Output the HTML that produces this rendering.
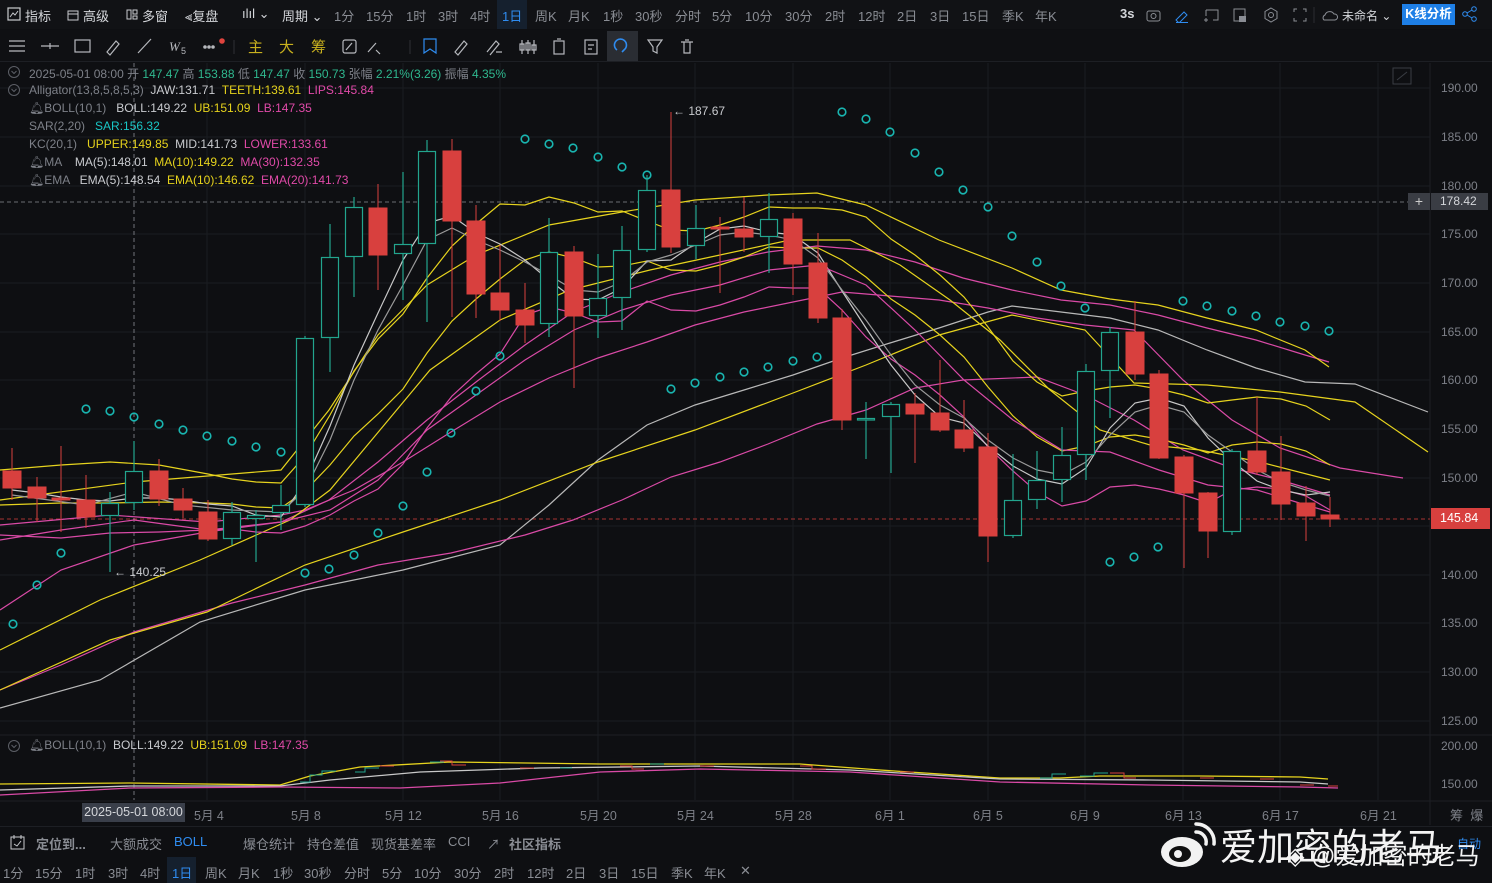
<!DOCTYPE html>
<html><head><meta charset="utf-8">
<style>
*{margin:0;padding:0;box-sizing:border-box}
body{width:1492px;height:883px;overflow:hidden;background:#0e0f12;font-family:"Liberation Sans","Noto Sans CJK SC",sans-serif;color:#8a8d94;position:relative}
.a{position:absolute;white-space:nowrap}
.tb{font-size:13px;top:6px;color:#8a8d94}
.w{color:#d4d6da}
.lg{font-size:12px;left:29px}
.g{color:#7d8088}.gr{color:#2fb88f}.y{color:#e5d21c}.m{color:#e04aa8}.c{color:#19c6c6}.wt{color:#c9cbcf}
.ax{font-size:12px;color:#7d8088;left:1441px}
.dt{font-size:12.5px;color:#7d8088;top:805px}
.bt{font-size:13px;top:834px;color:#8a8d94}
.tf{font-size:13px;top:863px;color:#8a8d94}
</style></head><body>
<!-- top toolbar -->
<div class="a" style="left:0;top:0;width:1492px;height:29px;background:#111215"></div>
<svg class="a" style="left:7px;top:7px" width="14" height="14"><rect x="1" y="1" width="12" height="12" fill="none" stroke="#c9cbcf" stroke-width="1.2"/><polyline points="3,10 6,6 8,8 11,4" fill="none" stroke="#c9cbcf"/></svg>
<div class="a tb w" style="left:25px">指标</div>
<svg class="a" style="left:67px;top:8px" width="12" height="13"><rect x="1" y="3" width="10" height="9" fill="none" stroke="#c9cbcf"/><line x1="1" y1="6" x2="11" y2="6" stroke="#c9cbcf"/></svg>
<div class="a tb w" style="left:83px">高级</div>
<svg class="a" style="left:126px;top:8px" width="12" height="13"><rect x="1" y="2" width="4" height="9" fill="none" stroke="#c9cbcf"/><rect x="7" y="2" width="4" height="4" fill="none" stroke="#c9cbcf"/><rect x="7" y="8" width="4" height="3" fill="none" stroke="#c9cbcf"/></svg>
<div class="a tb w" style="left:142px">多窗</div>
<div class="a tb w" style="left:185px">⫷复盘</div>
<div class="a tb w" style="left:242px">ılıl ⌄</div>
<div class="a tb w" style="left:282px">周期 ⌄</div>
<div class="a" style="left:497px;top:0;width:30px;height:29px;background:#15202e"></div>
<div class="a tb" style="left:334px">1分</div><div class="a tb" style="left:366px">15分</div><div class="a tb" style="left:406px">1时</div><div class="a tb" style="left:438px">3时</div><div class="a tb" style="left:470px">4时</div><div class="a tb" style="left:502px;color:#2f8cf0">1日</div><div class="a tb" style="left:535px">周K</div><div class="a tb" style="left:568px">月K</div><div class="a tb" style="left:603px">1秒</div><div class="a tb" style="left:635px">30秒</div><div class="a tb" style="left:675px">分时</div><div class="a tb" style="left:712px">5分</div><div class="a tb" style="left:745px">10分</div><div class="a tb" style="left:785px">30分</div><div class="a tb" style="left:825px">2时</div><div class="a tb" style="left:858px">12时</div><div class="a tb" style="left:897px">2日</div><div class="a tb" style="left:930px">3日</div><div class="a tb" style="left:962px">15日</div><div class="a tb" style="left:1002px">季K</div><div class="a tb" style="left:1035px">年K</div>
<div class="a tb w" style="left:1120px;font-weight:bold">3s</div>
<svg class="a" style="left:1146px;top:7px" width="330" height="16">
<rect x="1" y="4" width="13" height="10" rx="2" fill="none" stroke="#8a8d94"/><circle cx="7.5" cy="9" r="2.5" fill="none" stroke="#8a8d94"/>
<path d="M30 13 L38 5 L41 8 L33 16 Z" fill="none" stroke="#2f8cf0"/><line x1="30" y1="15.5" x2="42" y2="15.5" stroke="#2f8cf0"/>
<path d="M60 3 H72 V13 H67 M60 3 V9" fill="none" stroke="#8a8d94"/><path d="M60 11v4M58 13h4" stroke="#8a8d94"/>
<rect x="88" y="2" width="11" height="12" fill="none" stroke="#8a8d94"/><rect x="93" y="9" width="7" height="6" fill="#8a8d94"/>
<path d="M125 1 L131 4.5 V11.5 L125 15 L119 11.5 V4.5 Z" fill="none" stroke="#8a8d94"/><circle cx="125" cy="8" r="2.5" fill="none" stroke="#8a8d94"/>
<path d="M148 5V2H151M157 2H160V5M160 11V14H157M151 14H148V11" fill="none" stroke="#8a8d94"/>
<line x1="168" y1="0" x2="168" y2="16" stroke="#2a2c31"/>
<path d="M178 13 H189 A3 3 0 0 0 188 7 A5 5 0 0 0 179 8 A3 3 0 0 0 178 13Z" fill="none" stroke="#8a8d94"/>
</svg>
<div class="a tb w" style="left:1342px;font-size:12px;top:7px">未命名 ⌄</div>
<div class="a" style="left:1402px;top:4px;width:53px;height:21px;background:#1e7fe6;color:#fff;font-size:12.5px;line-height:21px;text-align:center;font-weight:bold">K线分析</div>
<svg class="a" style="left:1462px;top:6px" width="16" height="16"><circle cx="3" cy="8" r="2.3" fill="none" stroke="#2f8cf0"/><circle cx="12" cy="3" r="2.3" fill="none" stroke="#2f8cf0"/><circle cx="12" cy="13" r="2.3" fill="none" stroke="#2f8cf0"/><path d="M5 7L10 4M5 9L10 12" stroke="#2f8cf0"/></svg>

<!-- drawing toolbar -->
<div class="a" style="left:0;top:30px;width:1492px;height:32px;background:#0f1013;border-bottom:1px solid #1d1f24"></div>
<div class="a" style="left:607px;top:31px;width:31px;height:30px;background:#2a2d33"></div>
<svg class="a" style="left:0;top:30px" width="700" height="32">
<g stroke="#b6b8bd" fill="none" stroke-width="1.2">
<path d="M9 11h16M9 16h16M9 21h16"/>
<path d="M41 16h18M50 13v6"/>
<rect x="75" y="10" width="15" height="12"/>
<path d="M107 22l9-11 3 3-9 11z"/>
<path d="M138 23l13-14"/>
<text x="169" y="21" fill="#b6b8bd" stroke="none" font-size="13" font-style="italic" font-family="Liberation Serif">W</text><text x="181" y="24" fill="#b6b8bd" stroke="none" font-size="9">5</text>
<circle cx="205" cy="17" r="1.2" fill="#b6b8bd"/><circle cx="209" cy="17" r="1.2" fill="#b6b8bd"/><circle cx="213" cy="17" r="1.2" fill="#b6b8bd"/>
<line x1="234" y1="10" x2="234" y2="24" stroke="#2a2c31"/>
<rect x="343" y="10" width="13" height="13" rx="2"/><path d="M346 20l6-7"/>
<path d="M368 22l8-9M376 20l4 4"/>
<line x1="410" y1="10" x2="410" y2="24" stroke="#2a2c31"/>
<path d="M424 9h12v14l-6-4-6 4z" stroke="#2f8cf0"/>
<path d="M455 22l9-11 3 3-9 11z"/>
<path d="M487 22l9-11 3 3-9 11M496 22h6"/>
<path d="M522 10v14M528 10v14M534 10v14M520 14h4v6h-4zM526 13h4v7h-4zM532 15h4v5h-4z"/>
<rect x="554" y="11" width="10" height="13"/><path d="M557 9h4"/>
<rect x="585" y="10" width="12" height="14"/><path d="M588 15h6M588 19h4"/>
<path d="M617 20a6 6 0 1 1 8-1l-3 3" stroke="#2f8cf0" stroke-width="1.6"/>
<path d="M648 10h14l-5 7v6l-4-2v-4z"/>
<path d="M681 12h12M684 12v11h6v-11M685 10h4"/>
</g>
<circle cx="222" cy="11" r="2.8" fill="#e0443e"/>
<text x="248" y="22" fill="#c8b01e" font-size="15">主</text><text x="279" y="22" fill="#c8b01e" font-size="15">大</text><text x="311" y="22" fill="#c8b01e" font-size="15">筹</text>
</svg>

<!-- chart svg -->
<svg class="a" style="left:0;top:63px" width="1492" height="762" viewBox="0 63 1492 762">
<g stroke="#1a1c21" stroke-width="1">
<path d="M0 88H1430M0 137H1430M0 186H1430M0 234H1430M0 283H1430M0 332H1430M0 380H1430M0 429H1430M0 478H1430M0 526H1430M0 575H1430M0 623H1430M0 672H1430M0 721H1430"/>
<path d="M207 63V800M305 63V800M403 63V800M500 63V800M598 63V800M695 63V800M793 63V800M890 63V800M988 63V800M1085 63V800M1183 63V800M1280 63V800M1378 63V800"/>
</g>
<line x1="0" y1="735" x2="1492" y2="735" stroke="#1d1f24"/>
<line x1="0" y1="801" x2="1492" y2="801" stroke="#1d1f24"/>
<line x1="1430" y1="63" x2="1430" y2="825" stroke="#1d1f24"/>
<line x1="0" y1="202" x2="1430" y2="202" stroke="#8a8d94" stroke-dasharray="4,3" stroke-width="0.8"/>
<line x1="0" y1="519" x2="1430" y2="519" stroke="#d8403e" stroke-dasharray="4,3" stroke-width="0.8"/>
<line x1="134" y1="63" x2="134" y2="800" stroke="#8a8d94" stroke-dasharray="4,3" stroke-width="0.8"/>

<g fill="none" stroke-width="1.2">
<!-- long lines -->
<polyline stroke="#b8b8b8" points="0,708 100,680 200,622 305,590 403,570 500,545 549,505 598,460 647,425 695,405 744,390 793,375 842,358 890,343 939,328 988,312 1012,306 1061,312 1110,318 1158,330 1207,350 1256,368 1305,382 1355,384 1428,412"/>
<polyline stroke="#d94aa6" points="0,690 61,665 134,632 232,603 305,585 378,565 451,553 525,535 573,520 622,500 671,477 720,462 768,444 817,424 866,410 915,388 963,380 1037,377 1085,395 1134,420 1183,450 1232,468 1280,480 1330,495"/>
<polyline stroke="#d94aa6" points="0,610 61,570 134,545 207,532 281,522 329,500 378,462 427,420 476,382 525,345 573,312 622,292 671,275 720,262 768,252 817,246 866,250 915,262 963,278 1012,290 1061,300 1110,305 1158,315 1207,328 1256,340 1305,355 1329,362"/>
<polyline stroke="#d94aa6" points="0,525 110,515 207,522 281,515 305,510 354,490 403,462 451,432 500,402 549,378 598,358 647,342 695,325 744,312 793,302 842,292 890,296 939,300 988,308 1037,318 1085,325 1134,330 1183,380 1232,420 1280,448 1340,468 1403,478"/>
<polyline stroke="#e6d31e" points="0,500 134,482 281,470 329,410 378,335 427,285 476,255 549,225 622,212 695,200 768,195 817,193 866,205 939,240 1012,268 1061,290 1110,299 1158,305 1207,318 1256,330 1305,350 1329,367"/>
<polyline stroke="#e6d31e" points="0,690 110,640 207,612 305,565 403,532 500,500 598,462 695,430 793,393 866,365 939,335 1012,315 1085,330 1134,383 1207,385 1280,392 1355,402 1428,452"/>
<polyline stroke="#e6d31e" points="0,650 100,600 200,560 290,520 330,490 380,430 430,370 500,320 570,290 650,270 720,255 790,240 850,240 900,265 950,300 1000,340 1050,390 1100,430 1150,445 1200,450 1260,462 1330,480"/>
<!-- boll -->
<polyline stroke="#e6d31e" points="0,470 61,465 110,462 159,465 208,474 232,479 256,482 281,483 305,456 330,415 354,371 378,339 403,314 427,278 452,246 476,224 500,204 525,205 549,197 574,203 598,212 622,211 647,221 671,230 696,231 720,225 744,217 769,207 793,208 818,208 842,210 866,217 891,239 915,255 940,275 964,297 988,327 1013,361 1037,382 1062,396 1086,391 1110,387 1135,385 1159,389 1184,395 1208,403 1232,400 1257,397 1281,399 1306,406 1330,420"/>
<polyline stroke="#d94aa6" points="0,535 61,538 110,533 159,532 208,530 232,529 256,532 281,533 305,526 330,515 354,501 378,489 403,464 427,428 452,396 476,374 500,354 525,315 549,307 574,313 598,322 622,321 647,301 671,310 696,311 720,305 744,297 769,287 793,288 818,288 842,310 866,337 891,359 915,375 940,395 964,417 988,447 1013,471 1037,492 1062,506 1086,501 1110,487 1135,485 1159,489 1184,495 1208,503 1232,490 1257,487 1281,489 1306,496 1330,510"/>
<!-- MA10 -->
<polyline stroke="#e6d31e" points="0,505 61,503 110,503 159,502 208,503 232,504 256,507 281,508 305,491 330,465 354,436 378,414 403,389 427,353 452,321 476,299 500,279 525,260 549,252 574,258 598,267 622,266 647,261 671,270 696,271 720,265 744,257 769,247 793,248 818,248 842,260 866,277 891,299 915,315 940,335 964,357 988,387 1013,416 1037,437 1062,451 1086,446 1110,437 1135,435 1159,439 1184,445 1208,453 1232,445 1257,442 1281,444 1306,451 1330,465"/>
<!-- MA5 -->
<polyline stroke="#c8c8c8" points="12,490 37,493 61,497 86,500 110,501 134,498 159,498 183,500 208,504 232,506 256,515 281,517 305,482 330,426 354,365 378,313 403,260 427,223 452,216 476,233 500,244 525,260 549,280 574,299 598,300 622,288 647,261 671,260 696,243 720,229 744,226 769,232 793,235 818,253 842,291 866,328 891,365 915,395 940,417 964,423 988,446 1013,466 1037,479 1062,484 1086,468 1110,428 1135,403 1159,398 1184,406 1208,438 1232,461 1257,481 1281,490 1306,495 1330,492"/>
<polyline stroke="#9a9a9a" points="12,495 86,505 134,492 183,505 232,510 281,512 305,490 330,440 354,380 378,330 403,285 427,240 452,228 476,240 500,250 525,262 549,275 574,290 598,292 622,282 647,262 671,255 696,245 720,235 744,232 769,235 793,240 818,258 842,290 866,320 891,355 915,385 940,405 964,418 988,440 1013,458 1037,470 1062,475 1086,462 1110,435 1135,412 1159,405 1184,412 1208,435 1232,452 1257,470 1281,482 1306,490 1330,496"/>
<polyline stroke="#d94aa6" points="0,540 61,530 134,520 208,530 281,522 330,510 378,480 427,430 476,395 525,360 574,330 622,310 671,295 720,285 769,270 818,265 866,285 915,330 964,380 1013,420 1062,450 1110,452 1159,470 1208,485 1257,490 1306,505 1330,512"/>
</g>

<!-- SAR -->
<g fill="none" stroke="#19b5b0" stroke-width="1.6">
<circle cx="13" cy="624" r="3.8"/><circle cx="37" cy="585" r="3.8"/><circle cx="61" cy="553" r="3.8"/><circle cx="86" cy="409" r="3.8"/><circle cx="110" cy="411" r="3.8"/><circle cx="134" cy="417" r="3.8"/><circle cx="159" cy="424" r="3.8"/><circle cx="183" cy="430" r="3.8"/><circle cx="207" cy="436" r="3.8"/><circle cx="232" cy="441" r="3.8"/><circle cx="256" cy="447" r="3.8"/><circle cx="281" cy="452" r="3.8"/><circle cx="305" cy="573" r="3.8"/><circle cx="329" cy="569" r="3.8"/><circle cx="354" cy="555" r="3.8"/><circle cx="378" cy="533" r="3.8"/><circle cx="403" cy="506" r="3.8"/><circle cx="427" cy="472" r="3.8"/><circle cx="451" cy="433" r="3.8"/><circle cx="476" cy="391" r="3.8"/><circle cx="500" cy="356" r="3.8"/><circle cx="525" cy="139" r="3.8"/><circle cx="549" cy="144" r="3.8"/><circle cx="573" cy="148" r="3.8"/><circle cx="598" cy="157" r="3.8"/><circle cx="622" cy="167" r="3.8"/><circle cx="647" cy="175" r="3.8"/><circle cx="671" cy="389" r="3.8"/><circle cx="695" cy="383" r="3.8"/><circle cx="720" cy="377" r="3.8"/><circle cx="744" cy="372" r="3.8"/><circle cx="768" cy="367" r="3.8"/><circle cx="793" cy="361" r="3.8"/><circle cx="817" cy="357" r="3.8"/><circle cx="842" cy="112" r="3.8"/><circle cx="866" cy="119" r="3.8"/><circle cx="890" cy="132" r="3.8"/><circle cx="915" cy="153" r="3.8"/><circle cx="939" cy="172" r="3.8"/><circle cx="963" cy="190" r="3.8"/><circle cx="988" cy="207" r="3.8"/><circle cx="1012" cy="236" r="3.8"/><circle cx="1037" cy="262" r="3.8"/><circle cx="1061" cy="286" r="3.8"/><circle cx="1085" cy="308" r="3.8"/><circle cx="1110" cy="562" r="3.8"/><circle cx="1134" cy="557" r="3.8"/><circle cx="1158" cy="547" r="3.8"/><circle cx="1183" cy="301" r="3.8"/><circle cx="1207" cy="306" r="3.8"/><circle cx="1232" cy="311" r="3.8"/><circle cx="1256" cy="316" r="3.8"/><circle cx="1280" cy="322" r="3.8"/><circle cx="1305" cy="326" r="3.8"/><circle cx="1329" cy="331" r="3.8"/>
</g>

<!-- candles: red -->
<g stroke="#d8403e" fill="#d8403e" stroke-width="1">
<line x1="12" y1="448" x2="12" y2="500"/><rect x="3" y="471" width="18" height="17"/>
<line x1="37" y1="477" x2="37" y2="522"/><rect x="28" y="487" width="18" height="11"/>
<line x1="61" y1="446" x2="61" y2="532"/><rect x="52" y="498" width="18" height="2"/>
<line x1="86" y1="475" x2="86" y2="528"/><rect x="77" y="500" width="18" height="17"/>
<line x1="159" y1="459" x2="159" y2="506"/><rect x="150" y="471" width="18" height="28"/>
<line x1="183" y1="488" x2="183" y2="518"/><rect x="174" y="499" width="18" height="11"/>
<line x1="208" y1="500" x2="208" y2="541"/><rect x="199" y="512" width="18" height="27"/>
<line x1="378" y1="184" x2="378" y2="290"/><rect x="369" y="208" width="18" height="47"/>
<line x1="452" y1="139" x2="452" y2="317"/><rect x="443" y="151" width="18" height="70"/>
<line x1="476" y1="205" x2="476" y2="318"/><rect x="467" y="221" width="18" height="73"/>
<line x1="500" y1="245" x2="500" y2="321"/><rect x="491" y="293" width="18" height="17"/>
<line x1="525" y1="283" x2="525" y2="343"/><rect x="516" y="310" width="18" height="15"/>
<line x1="574" y1="246" x2="574" y2="388"/><rect x="565" y="252" width="18" height="64"/>
<line x1="671" y1="112" x2="671" y2="253"/><rect x="662" y="190" width="18" height="57"/>
<line x1="720" y1="217" x2="720" y2="293"/><rect x="711" y="227" width="18" height="2"/>
<line x1="744" y1="197" x2="744" y2="252"/><rect x="735" y="229" width="18" height="8"/>
<line x1="793" y1="213" x2="793" y2="295"/><rect x="784" y="219" width="18" height="45"/>
<line x1="818" y1="233" x2="818" y2="323"/><rect x="809" y="263" width="18" height="55"/>
<line x1="842" y1="309" x2="842" y2="430"/><rect x="833" y="318" width="18" height="102"/>
<line x1="915" y1="393" x2="915" y2="463"/><rect x="906" y="404" width="18" height="10"/>
<line x1="940" y1="360" x2="940" y2="432"/><rect x="931" y="413" width="18" height="17"/>
<line x1="964" y1="400" x2="964" y2="452"/><rect x="955" y="430" width="18" height="18"/>
<line x1="988" y1="433" x2="988" y2="562"/><rect x="979" y="447" width="18" height="89"/>
<line x1="1135" y1="301" x2="1135" y2="380"/><rect x="1126" y="332" width="18" height="42"/>
<line x1="1159" y1="370" x2="1159" y2="459"/><rect x="1150" y="374" width="18" height="84"/>
<line x1="1184" y1="455" x2="1184" y2="568"/><rect x="1175" y="457" width="18" height="36"/>
<line x1="1208" y1="492" x2="1208" y2="558"/><rect x="1199" y="493" width="18" height="38"/>
<line x1="1257" y1="397" x2="1257" y2="475"/><rect x="1248" y="451" width="18" height="21"/>
<line x1="1281" y1="436" x2="1281" y2="520"/><rect x="1272" y="472" width="18" height="32"/>
<line x1="1306" y1="486" x2="1306" y2="541"/><rect x="1297" y="503" width="18" height="13"/>
<line x1="1330" y1="497" x2="1330" y2="527"/><rect x="1321" y="515" width="18" height="4"/>
</g>
<!-- green hollow -->
<g stroke="#22a58e" fill="#0e0f12" stroke-width="1.2">
<line x1="110" y1="492" x2="110" y2="572"/><rect x="101.5" y="503.5" width="17" height="12"/>
<line x1="134" y1="441" x2="134" y2="510"/><rect x="125.5" y="471.5" width="17" height="31"/>
<line x1="232" y1="502" x2="232" y2="545"/><rect x="223.5" y="512.5" width="17" height="26"/>
<line x1="256" y1="510" x2="256" y2="562"/><rect x="247.5" y="515.5" width="17" height="3"/>
<line x1="281" y1="485" x2="281" y2="530"/><rect x="272.5" y="505.5" width="17" height="7"/>
<line x1="305" y1="336" x2="305" y2="507"/><rect x="296.5" y="338.5" width="17" height="166"/>
<line x1="330" y1="224" x2="330" y2="372"/><rect x="321.5" y="257.5" width="17" height="80"/>
<line x1="354" y1="197" x2="354" y2="297"/><rect x="345.5" y="207.5" width="17" height="49"/>
<line x1="403" y1="172" x2="403" y2="300"/><rect x="394.5" y="244.5" width="17" height="9"/>
<line x1="427" y1="140" x2="427" y2="322"/><rect x="418.5" y="151.5" width="17" height="92"/>
<line x1="549" y1="218" x2="549" y2="337"/><rect x="540.5" y="252.5" width="17" height="71"/>
<line x1="598" y1="254" x2="598" y2="338"/><rect x="589.5" y="298.5" width="17" height="17"/>
<line x1="622" y1="226" x2="622" y2="330"/><rect x="613.5" y="250.5" width="17" height="47"/>
<line x1="647" y1="175" x2="647" y2="252"/><rect x="638.5" y="190.5" width="17" height="59"/>
<line x1="696" y1="205" x2="696" y2="259"/><rect x="687.5" y="228.5" width="17" height="17"/>
<line x1="769" y1="193" x2="769" y2="273"/><rect x="760.5" y="219.5" width="17" height="17"/>
<line x1="866" y1="402" x2="866" y2="459"/><rect x="857.5" y="418.5" width="17" height="1.5"/>
<line x1="891" y1="402" x2="891" y2="473"/><rect x="882.5" y="404.5" width="17" height="12"/>
<line x1="1013" y1="454" x2="1013" y2="538"/><rect x="1004.5" y="500.5" width="17" height="35"/>
<line x1="1037" y1="451" x2="1037" y2="509"/><rect x="1028.5" y="480.5" width="17" height="19"/>
<line x1="1062" y1="427" x2="1062" y2="502"/><rect x="1053.5" y="455.5" width="17" height="24"/>
<line x1="1086" y1="364" x2="1086" y2="480"/><rect x="1077.5" y="371.5" width="17" height="83"/>
<line x1="1110" y1="327" x2="1110" y2="418"/><rect x="1101.5" y="332.5" width="17" height="38"/>
<line x1="1232" y1="449" x2="1232" y2="535"/><rect x="1223.5" y="451.5" width="17" height="80"/>
</g>
<text x="673" y="115" fill="#c9cbcf" font-size="12">← 187.67</text>
<text x="114" y="576" fill="#c9cbcf" font-size="12">← 140.25</text>
<rect x="1393" y="68" width="18" height="16" fill="none" stroke="#3a3d44"/><path d="M1397 80l10-8" stroke="#3a3d44"/>

<!-- sub chart -->
<g fill="none" stroke-width="1.3">
<polyline stroke="#e6d31e" points="0,784 130,783 280,785 310,776 360,767 450,762 600,764 800,764 880,770 1000,778 1060,778 1100,776 1200,776 1300,777 1328,779"/>
<polyline stroke="#c8c8c8" points="0,790 130,786 280,786 330,780 420,772 540,768 700,766 850,770 1000,779 1150,780 1300,782 1328,784"/>
<polyline stroke="#d94aa6" points="0,795 130,788 280,787 400,788 500,783 600,772 700,769 850,772 1000,782 1150,785 1300,787 1338,788"/>
</g>
<g stroke="#22a58e" stroke-width="1" fill="none"><path d="M300 782h10v-7h12v-4h14M355 772h10v-4h14M430 762h14M560 768h12M650 764h14M1040 778h12v-4h14M1080 776h14v-3h14"/></g>
<g stroke="#d8403e" stroke-width="1" fill="none"><path d="M380 766h14M440 761h12v4h14M520 768h14M620 766h12v3h12M700 766h14M800 766h12v3h14M900 772h14M1110 773h14v5h12M1200 778h14M1260 779h14M1300 785h14M1328 786h10"/></g>
</svg>

<!-- legend -->
<svg class="a" style="left:7px;top:66px" width="16" height="32"><circle cx="7" cy="6" r="5.5" fill="none" stroke="#5c5f66"/><path d="M4.5 5l2.5 2.5 2.5-2.5" fill="none" stroke="#5c5f66"/><circle cx="7" cy="24" r="5.5" fill="none" stroke="#5c5f66"/><path d="M4.5 23l2.5 2.5 2.5-2.5" fill="none" stroke="#5c5f66"/></svg>
<div class="a lg g" style="top:65px">2025-05-01 08:00 开 <span class="gr">147.47</span> 高 <span class="gr">153.88</span> 低 <span class="gr">147.47</span> 收 <span class="gr">150.73</span> 张幅 <span class="gr">2.21%(3.26)</span> 振幅 <span class="gr">4.35%</span></div>
<div class="a lg g" style="top:83px">Alligator(13,8,5,8,5,3) &nbsp;<span class="wt">JAW:131.71</span> &nbsp;<span class="y">TEETH:139.61</span> &nbsp;<span class="m">LIPS:145.84</span></div>
<div class="a lg g" style="top:101px">🔔︎BOLL(10,1) &nbsp;&nbsp;<span class="wt">BOLL:149.22</span> &nbsp;<span class="y">UB:151.09</span> &nbsp;<span class="m">LB:147.35</span></div>
<div class="a lg g" style="top:119px">SAR(2,20) &nbsp;&nbsp;<span class="c">SAR:156.32</span></div>
<div class="a lg g" style="top:137px">KC(20,1) &nbsp;&nbsp;<span class="y">UPPER:149.85</span> &nbsp;<span class="wt">MID:141.73</span> &nbsp;<span class="m">LOWER:133.61</span></div>
<div class="a lg g" style="top:155px">🔔︎MA &nbsp;&nbsp;&nbsp;<span class="wt">MA(5):148.01</span> &nbsp;<span class="y">MA(10):149.22</span> &nbsp;<span class="m">MA(30):132.35</span></div>
<div class="a lg g" style="top:173px">🔔︎EMA &nbsp;&nbsp;<span class="wt">EMA(5):148.54</span> &nbsp;<span class="y">EMA(10):146.62</span> &nbsp;<span class="m">EMA(20):141.73</span></div>
<svg class="a" style="left:7px;top:739px" width="16" height="14"><circle cx="7" cy="7" r="5.5" fill="none" stroke="#5c5f66"/><path d="M4.5 6l2.5 2.5 2.5-2.5" fill="none" stroke="#5c5f66"/></svg>
<div class="a lg g" style="top:738px">🔔︎BOLL(10,1) &nbsp;<span class="wt">BOLL:149.22</span> &nbsp;<span class="y">UB:151.09</span> &nbsp;<span class="m">LB:147.35</span></div>

<!-- price axis -->
<div class="a ax" style="top:81px">190.00</div><div class="a ax" style="top:130px">185.00</div><div class="a ax" style="top:179px">180.00</div><div class="a ax" style="top:227px">175.00</div><div class="a ax" style="top:276px">170.00</div><div class="a ax" style="top:325px">165.00</div><div class="a ax" style="top:373px">160.00</div><div class="a ax" style="top:422px">155.00</div><div class="a ax" style="top:471px">150.00</div><div class="a ax" style="top:568px">140.00</div><div class="a ax" style="top:616px">135.00</div><div class="a ax" style="top:665px">130.00</div><div class="a ax" style="top:714px">125.00</div>
<div class="a ax" style="top:739px">200.00</div><div class="a ax" style="top:777px">150.00</div>
<div class="a" style="left:1408px;top:193px;width:22px;height:17px;background:#3a3d44;color:#ccc;font-size:14px;line-height:16px;text-align:center">+</div>
<div class="a" style="left:1431px;top:193px;width:57px;height:17px;background:#3a3d44;color:#d4d6da;font-size:12px;line-height:17px;padding-left:9px">178.42</div>
<div class="a" style="left:1431px;top:508px;width:59px;height:21px;background:#d8403e;color:#fff;font-size:12.5px;line-height:21px;padding-left:9px">145.84</div>

<!-- date axis -->
<div class="a" style="left:82px;top:803px;width:103px;height:19px;background:#3a3f4a;color:#d4d6da;font-size:12.5px;line-height:19px;text-align:center">2025-05-01 08:00</div>
<div class="a dt" style="left:194px">5月 4</div><div class="a dt" style="left:291px">5月 8</div><div class="a dt" style="left:385px">5月 12</div><div class="a dt" style="left:482px">5月 16</div><div class="a dt" style="left:580px">5月 20</div><div class="a dt" style="left:677px">5月 24</div><div class="a dt" style="left:775px">5月 28</div><div class="a dt" style="left:875px">6月 1</div><div class="a dt" style="left:973px">6月 5</div><div class="a dt" style="left:1070px">6月 9</div><div class="a dt" style="left:1165px">6月 13</div><div class="a dt" style="left:1262px">6月 17</div><div class="a dt" style="left:1360px">6月 21</div>
<div class="a dt" style="left:1450px;font-size:13px">筹 &nbsp;爆</div>

<!-- bottom bars -->
<div class="a" style="left:0;top:826px;width:1492px;height:1px;background:#1d1f24"></div>
<svg class="a" style="left:10px;top:834px" width="16" height="16"><rect x="1" y="3" width="13" height="12" fill="none" stroke="#c9cbcf"/><path d="M4 1v4M11 1v4M4 10l3 2 4-5" fill="none" stroke="#c9cbcf"/></svg>
<div class="a bt w" style="left:36px;font-weight:bold">定位到...</div>
<div class="a bt" style="left:110px">大额成交</div><div class="a bt" style="left:174px;color:#2f8cf0">BOLL</div>
<div class="a bt" style="left:243px">爆仓统计</div><div class="a bt" style="left:307px">持仓差值</div><div class="a bt" style="left:371px">现货基差率</div><div class="a bt" style="left:448px">CCI</div>
<div class="a bt" style="left:487px">↗︎</div><div class="a bt w" style="left:509px;font-weight:bold">社区指标</div>
<div class="a" style="left:167px;top:857px;width:29px;height:26px;background:#15202e"></div>
<div class="a tf" style="left:3px">1分</div><div class="a tf" style="left:35px">15分</div><div class="a tf" style="left:75px">1时</div><div class="a tf" style="left:108px">3时</div><div class="a tf" style="left:140px">4时</div><div class="a tf" style="left:172px;color:#2f8cf0">1日</div><div class="a tf" style="left:205px">周K</div><div class="a tf" style="left:238px">月K</div><div class="a tf" style="left:273px">1秒</div><div class="a tf" style="left:304px">30秒</div><div class="a tf" style="left:344px">分时</div><div class="a tf" style="left:382px">5分</div><div class="a tf" style="left:414px">10分</div><div class="a tf" style="left:454px">30分</div><div class="a tf" style="left:494px">2时</div><div class="a tf" style="left:527px">12时</div><div class="a tf" style="left:566px">2日</div><div class="a tf" style="left:599px">3日</div><div class="a tf" style="left:631px">15日</div><div class="a tf" style="left:671px">季K</div><div class="a tf" style="left:704px">年K</div><div class="a tf" style="left:740px">✕</div>

<!-- watermark -->
<div class="a" style="left:1457px;top:835px;font-size:12px;color:#2f8cf0">自动</div>
<svg class="a" style="left:1158px;top:822px" width="58" height="48">
<ellipse cx="24" cy="30" rx="21" ry="15" fill="#f2f2f2"/>
<ellipse cx="22" cy="32" rx="11" ry="8" fill="#111"/>
<circle cx="20" cy="32" r="4" fill="#f2f2f2"/>
<path d="M38 10 a10 10 0 0 1 10 12" fill="none" stroke="#f2f2f2" stroke-width="3.5" stroke-linecap="round"/>
<path d="M38 2 a18 18 0 0 1 18 20" fill="none" stroke="#f2f2f2" stroke-width="3.5" stroke-linecap="round"/>
</svg>
<div class="a" style="left:1220px;top:824px;font-size:37px;color:#f4f4f4;line-height:48px">爱加密的老马</div>
<div class="a" style="left:1286px;top:842px;font-size:24px;color:#f4f4f4;line-height:30px">◈ @爱加密的老马</div>
</body></html>
